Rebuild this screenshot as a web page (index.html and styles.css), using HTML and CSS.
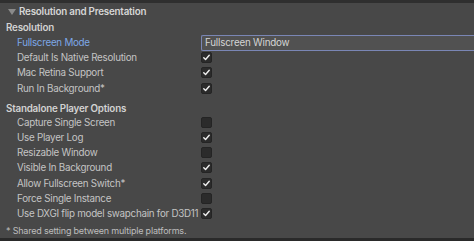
FILE: index.html
```html
<!DOCTYPE html>
<html>
<head>
<meta charset="utf-8">
<link rel="stylesheet" href="styles.css">
</head>
<body>
<div class="topbar"></div>
<div class="foldout">
  <svg class="tri" width="8" height="6" viewBox="0 0 8 6"><path d="M0 0 L8 0 L4 6 Z" fill="#8a8a8a"/></svg>
  <span>Resolution and Presentation</span>
</div>
<div class="panel">
  <div class="section">Resolution</div>
  <div class="row">
    <div class="label focus">Fullscreen Mode</div>
    <div class="dropdown">Fullscreen Window</div>
  </div>
  <div class="row"><div class="label">Default Is Native Resolution</div><div class="cb on"><svg viewBox="0 0 12 12"><path d="M3 6.2 L5 8.2 L9 3.6" /></svg></div></div>
  <div class="row"><div class="label">Mac Retina Support</div><div class="cb on"><svg viewBox="0 0 12 12"><path d="M3 6.2 L5 8.2 L9 3.6" /></svg></div></div>
  <div class="row"><div class="label">Run In Background*</div><div class="cb on"><svg viewBox="0 0 12 12"><path d="M3 6.2 L5 8.2 L9 3.6" /></svg></div></div>
  <div class="section gap">Standalone Player Options</div>
  <div class="row"><div class="label">Capture Single Screen</div><div class="cb"></div></div>
  <div class="row"><div class="label">Use Player Log</div><div class="cb on"><svg viewBox="0 0 12 12"><path d="M3 6.2 L5 8.2 L9 3.6" /></svg></div></div>
  <div class="row"><div class="label">Resizable Window</div><div class="cb"></div></div>
  <div class="row"><div class="label">Visible In Background</div><div class="cb on"><svg viewBox="0 0 12 12"><path d="M3 6.2 L5 8.2 L9 3.6" /></svg></div></div>
  <div class="row"><div class="label">Allow Fullscreen Switch*</div><div class="cb on"><svg viewBox="0 0 12 12"><path d="M3 6.2 L5 8.2 L9 3.6" /></svg></div></div>
  <div class="row"><div class="label">Force Single Instance</div><div class="cb"></div></div>
  <div class="row"><div class="label">Use DXGI flip model swapchain for D3D11</div><div class="cb on"><svg viewBox="0 0 12 12"><path d="M3 6.2 L5 8.2 L9 3.6" /></svg></div></div>
  <div class="note">* Shared setting between multiple platforms.</div>
</div>
<div class="bottombar"></div>
</body>
</html>
```
FILE: styles.css
```css
html, body {
  margin: 0;
  padding: 0;
  height: 241px;
  overflow: hidden;
}
body {
  background: #484848;
  font-family: Inter, "Noto Sans", sans-serif;
  font-size: 9.8px;
  letter-spacing: -0.2px;
  color: #c4c4c4;
  display: flex;
  flex-direction: column;
  width: 474px;
}
.topbar {
  height: 3px;
  background: #2f2f2f;
  flex: none;
}
.foldout {
  height: 17px;
  display: flex;
  align-items: center;
  padding-left: 8px;
  font-weight: 600;
  color: #d6d6d6;
  flex: none;
}
.tri {
  margin-right: 3px;
}
.panel {
  flex: 1;
  padding-left: 6px;
}
.section {
  height: 15px;
  line-height: 15px;
  font-weight: 600;
  color: #d2d2d2;
}
.section.gap {
  margin-top: 7px;
  height: 12px;
  line-height: 12px;
}
.row {
  height: 15.2px;
  display: flex;
  align-items: center;
}
.label {
  width: 184px;
  padding-left: 11px;
  white-space: nowrap;
  letter-spacing: -0.26px;
  flex: none;
}
.label.focus {
  color: #7da7e6;
}
.dropdown {
  flex: 1;
  height: 14px;
  line-height: 14px;
  background: #515151;
  border: 1px solid #7a86b5;
  border-right: none;
  border-radius: 2px 0 0 2px;
  padding-left: 3px;
  color: #d4d4d4;
}
.cb {
  width: 11px;
  height: 11px;
  background: #2b2b2b;
  border: 1px solid #242424;
  border-radius: 2px;
  box-sizing: border-box;
  flex: none;
}
.cb svg {
  display: block;
  width: 11px;
  height: 11px;
  margin: -1px;
}
.cb svg path {
  fill: none;
  stroke: #f0f0f0;
  stroke-width: 1.5;
  stroke-linecap: round;
  stroke-linejoin: round;
}
.note {
  margin-top: 4px;
  font-size: 9px;
  color: #bdbdbd;
}
.bottombar {
  height: 3px;
  background: #2a2a2a;
  flex: none;
}
```
